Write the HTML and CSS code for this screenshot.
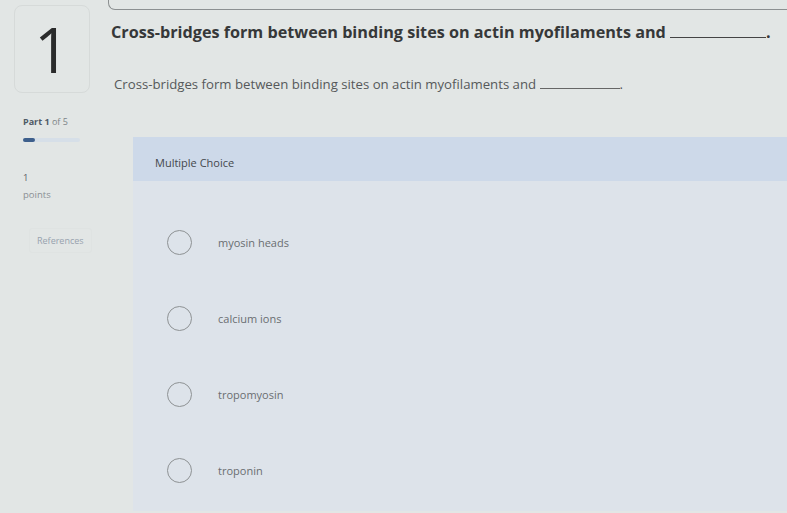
FILE: index.html
```html
<!DOCTYPE html>
<html lang="en">
<head>
  <meta charset="UTF-8">
  <meta name="viewport" content="width=device-width, initial-scale=1">
  <title>Question 1</title>
  <link rel="stylesheet" href="styles.css">
</head>
<body>

<div class="top">
  <div class="num-box">1</div>
  <div class="question">
    <div class="prev-box"></div>
    <h1 class="q-title">Cross-bridges form between binding sites on actin myofilaments and <span class="blank big"></span>.</h1>
    <p class="q-text">Cross-bridges form between binding sites on actin myofilaments and <span class="blank"></span>.</p>
  </div>
</div>

<div class="lower">
  <div class="side">
    <div class="part"><b>Part 1</b> of 5</div>
    <div class="progress"><div class="fill"></div></div>
    <div class="points">
      <div class="pts-num">1</div>
      <div class="pts-label">points</div>
    </div>
    <button class="refs">References</button>
  </div>

  <div class="panel">
    <div class="panel-head">Multiple Choice</div>
    <div class="options">
      <label class="option"><span class="radio"></span><span class="opt-text">myosin heads</span></label>
      <label class="option"><span class="radio"></span><span class="opt-text">calcium ions</span></label>
      <label class="option"><span class="radio"></span><span class="opt-text">tropomyosin</span></label>
      <label class="option"><span class="radio"></span><span class="opt-text">troponin</span></label>
    </div>
  </div>
</div>

</body>
</html>
```

FILE: styles.css
```css
body {
  margin: 0;
  height: 513px;
  background: #e2e6e5;
  font-family: "Open Sans", Arial, sans-serif;
  color: #3a3c3d;
  overflow: hidden;
}
.top {
  display: flex;
}
.num-box {
  margin: 5px 0 0 14px;
  width: 76px;
  height: 88px;
  border: 1px solid #d6dad9;
  border-radius: 8px;
  display: flex;
  justify-content: center;
  align-items: center;
  font-size: 62px;
  font-weight: 400;
  color: #2a2b2b;
  box-sizing: border-box;
}
.question {
  flex: 1;
  margin-left: 18px;
}
.prev-box {
  height: 9px;
  border: 1px solid #8c9091;
  border-top: none;
  border-right: none;
  border-radius: 0 0 0 7px;
}
.q-title {
  margin: 11px 0 0 3px;
  font-size: 16.2px;
  font-weight: 700;
  color: #363839;
}
.blank {
  display: inline-block;
  width: 80px;
  border-bottom: 1px solid #666;
}
.blank.big {
  width: 96px;
  border-bottom-color: #444;
}
.q-text {
  margin: 32px 0 0 6px;
  font-size: 13.2px;
  color: #56595a;
}
.lower {
  display: flex;
  margin-top: 18px;
  height: 400px;
}
.side {
  width: 133px;
  padding: 4px 0 0 23px;
  box-sizing: border-box;
  flex-shrink: 0;
}
.part {
  font-size: 9px;
  color: #7d8488;
}
.part b {
  color: #4f5a66;
}
.progress {
  margin-top: 10px;
  width: 57px;
  height: 4px;
  border-radius: 2px;
  background: #d6dfe8;
}
.fill {
  width: 12px;
  height: 4px;
  border-radius: 2px;
  background: #3d5f8c;
}
.points {
  margin-top: 29px;
  font-size: 9.5px;
  color: #8b9094;
}
.pts-num {
  color: #5c6166;
  margin-bottom: 4px;
}
.refs {
  margin: 27px 0 0 6px;
  padding: 5px 7px;
  font-family: inherit;
  font-size: 9px;
  color: #97a2ae;
  background: transparent;
  border: 1px solid #dfe3e2;
  border-radius: 3px;
}
.panel {
  flex: 1;
  margin-top: 26px;
  background: #dde3ea;
}
.panel-head {
  height: 44px;
  padding: 6px 0 0 22px;
  box-sizing: border-box;
  display: flex;
  align-items: center;
  background: #cdd9e9;
  font-size: 11px;
  color: #44484c;
}
.options {
  padding: 23px 0 0 10px;
}
.option {
  display: flex;
  align-items: center;
  height: 76px;
  padding-left: 24px;
}
.radio {
  width: 23px;
  height: 23px;
  border: 1.5px solid #8e9294;
  border-radius: 50%;
  flex-shrink: 0;
}
.opt-text {
  margin-left: 26px;
  font-size: 11px;
  color: #6a6e71;
}
```
